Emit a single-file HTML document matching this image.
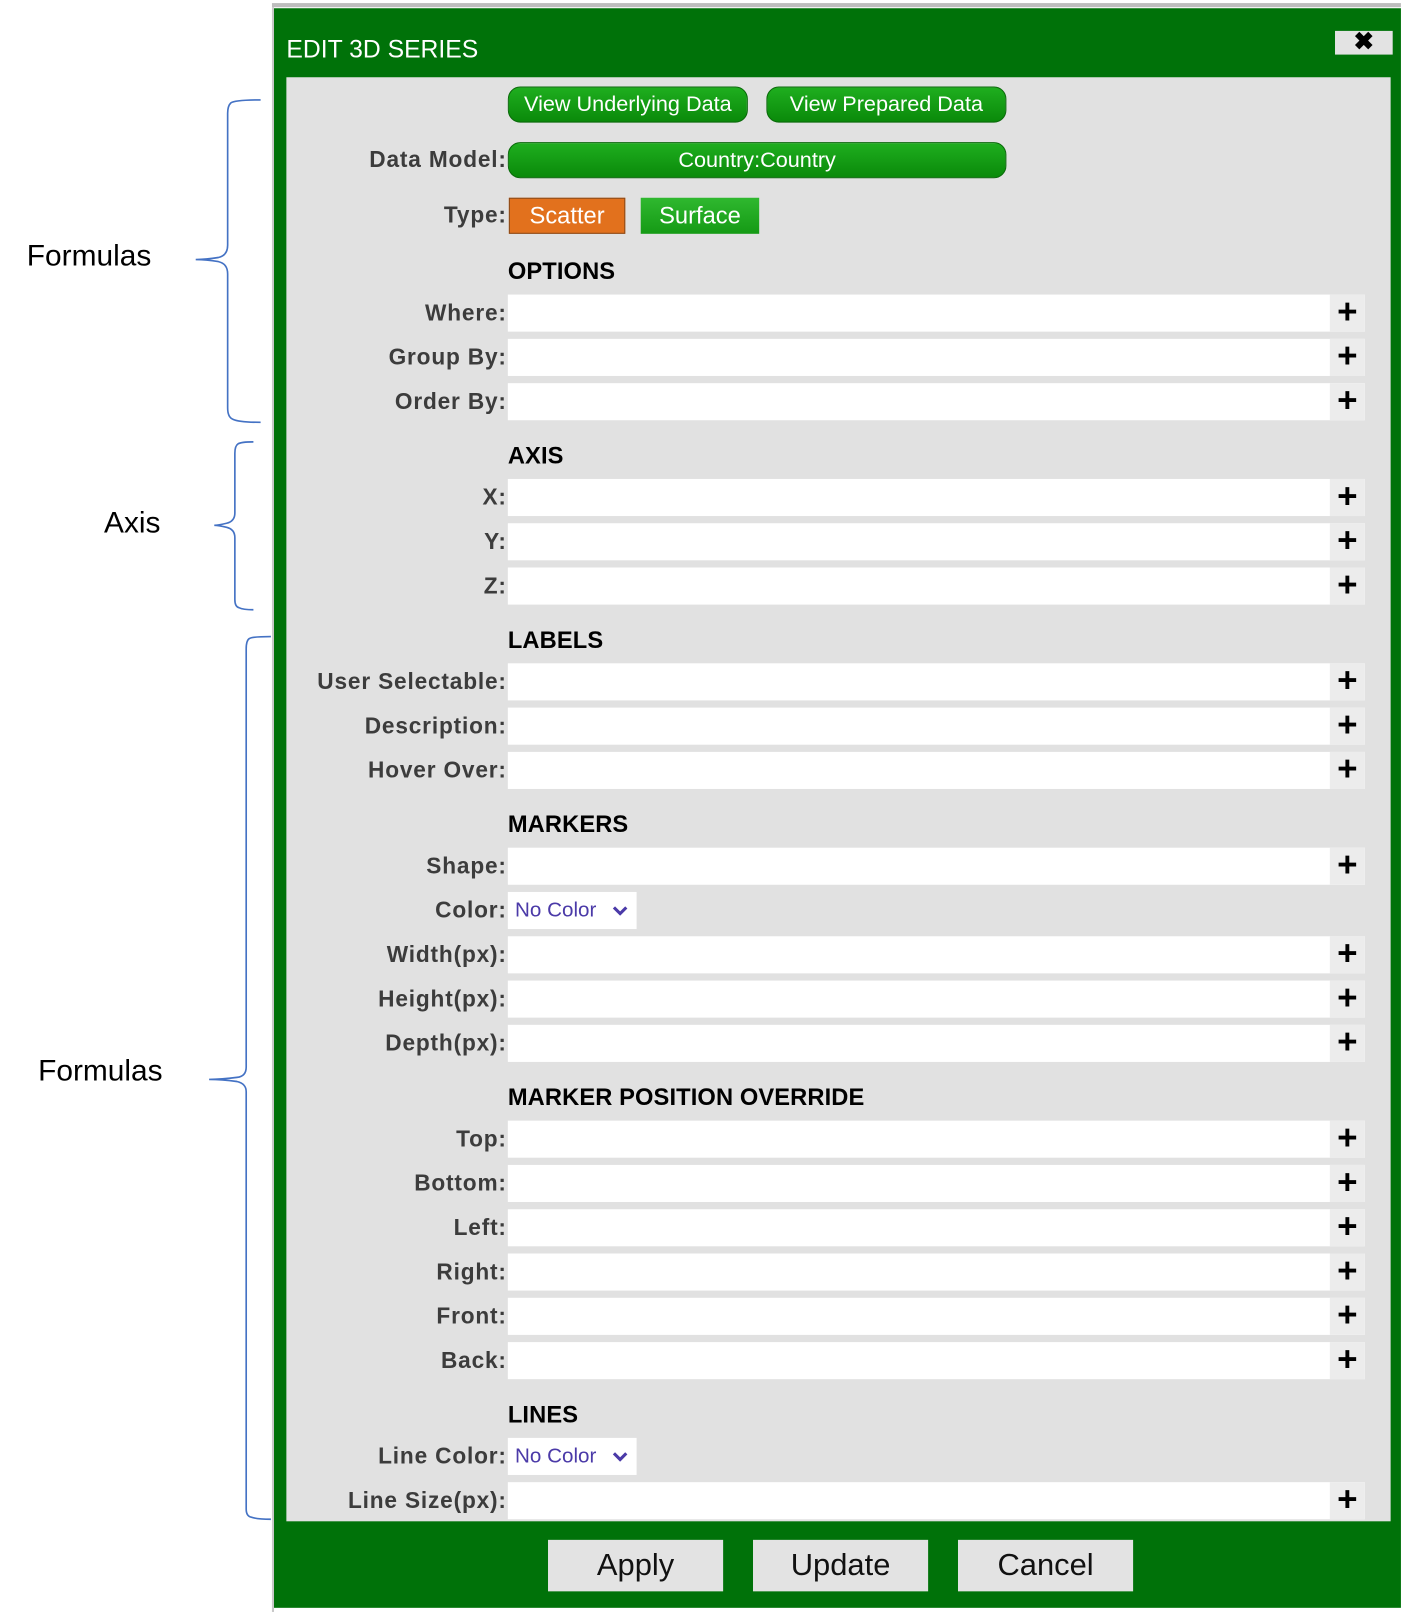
<!DOCTYPE html>
<html><head><meta charset="utf-8"><style>
*{margin:0;padding:0;box-sizing:border-box}
html,body{width:1401px;height:1612px;overflow:hidden;background:#fff}
#s{position:absolute;left:0;top:0;width:1360px;height:1565px;transform:scale(1.0301,1.0300);transform-origin:0 0;font-family:"Liberation Sans Narrow","Liberation Sans",sans-serif}
.a{position:absolute}
.lbl{position:absolute;right:868px;width:300px;text-align:right;font-family:"Liberation Sans",sans-serif;font-weight:bold;font-size:22px;letter-spacing:0.8px;color:#3c3c3c;height:36px;line-height:36px}
.inp{position:absolute;left:493px;width:832px;height:36px;background:#fff}
.inp b{position:absolute;right:0;top:0;width:34px;height:36px;background:#ececec;font-family:"Liberation Sans",sans-serif;font-weight:900;font-size:34px;line-height:34px;text-align:center;color:#000}
.h{position:absolute;left:493px;font-weight:bold;font-size:23px;color:#000;line-height:26px;letter-spacing:.1px}
.gb{position:absolute;background:linear-gradient(#1fae1f,#0a8a0a);color:#fff;border-radius:12px;font-size:21px;text-align:center;line-height:34px;height:35px;border:1px solid #0a6a0a}
.sel{position:absolute;left:493px;width:125px;height:36px;background:#fff;color:#4b3aa8;font-family:"Liberation Sans",sans-serif;font-size:20px;line-height:36px;padding-left:7px}
.sel svg{position:absolute;left:101px;top:13px}
.fb{position:absolute;top:1495px;width:170px;height:50px;background:#e3e3e3;font-family:"Liberation Sans",sans-serif;font-size:30px;line-height:50px;text-align:center;color:#111}
.ann{position:absolute;font-family:"Liberation Sans",sans-serif;font-size:29px;color:#000}
</style></head><body><div id="s">
<div class="a" style="left:264px;top:3px;width:1096px;height:4px;background:#bdbdbd"></div>
<div class="a" style="left:264px;top:7px;width:2px;height:1558px;background:#c8c8c8"></div>
<div class="a" style="left:266px;top:8px;width:1094px;height:1553px;background:#007209"></div>
<div class="a" style="left:278px;top:35px;color:#fff;font-size:24px">EDIT 3D SERIES</div>
<div class="a" style="left:1296px;top:30px;width:56px;height:23px;background:#e3e3e3;text-align:center;font-family:'Liberation Sans',sans-serif;font-weight:900;font-size:24px;line-height:22px">✖</div>
<div class="a" style="left:278px;top:75px;width:1072px;height:1402px;background:#e1e1e1"></div>
<div class="gb" style="left:493px;top:84px;width:233px">View Underlying Data</div>
<div class="gb" style="left:744px;top:84px;width:233px">View Prepared Data</div>
<div class="lbl" style="top:137px">Data Model:</div>
<div class="gb" style="left:493px;top:138px;width:484px">Country:Country</div>
<div class="lbl" style="top:191px">Type:</div>
<div class="a" style="left:494px;top:192px;width:113px;height:35px;background:#e2711d;border:1px solid #8a4a1a;color:#fff;font-size:23px;text-align:center;line-height:33px">Scatter</div>
<div class="a" style="left:622px;top:192px;width:115px;height:35px;background:linear-gradient(#2fb82f,#159a15);color:#fff;font-size:23px;text-align:center;line-height:35px">Surface</div>
<div class="h" style="top:250px">OPTIONS</div>
<div class="lbl" style="top:286px">Where:</div><div class="inp" style="top:286px"><b>+</b></div>
<div class="lbl" style="top:329px">Group By:</div><div class="inp" style="top:329px"><b>+</b></div>
<div class="lbl" style="top:372px">Order By:</div><div class="inp" style="top:372px"><b>+</b></div>
<div class="h" style="top:429px">AXIS</div>
<div class="lbl" style="top:465px">X:</div><div class="inp" style="top:465px"><b>+</b></div>
<div class="lbl" style="top:508px">Y:</div><div class="inp" style="top:508px"><b>+</b></div>
<div class="lbl" style="top:551px">Z:</div><div class="inp" style="top:551px"><b>+</b></div>
<div class="h" style="top:608px">LABELS</div>
<div class="lbl" style="top:644px">User Selectable:</div><div class="inp" style="top:644px"><b>+</b></div>
<div class="lbl" style="top:687px">Description:</div><div class="inp" style="top:687px"><b>+</b></div>
<div class="lbl" style="top:730px">Hover Over:</div><div class="inp" style="top:730px"><b>+</b></div>
<div class="h" style="top:787px">MARKERS</div>
<div class="lbl" style="top:823px">Shape:</div><div class="inp" style="top:823px"><b>+</b></div>
<div class="lbl" style="top:866px">Color:</div><div class="sel" style="top:866px">No Color<svg width="16" height="10"><path d="M2 2 L8 8 L14 2" fill="none" stroke="#4b3aa8" stroke-width="3"/></svg></div>
<div class="lbl" style="top:909px">Width(px):</div><div class="inp" style="top:909px"><b>+</b></div>
<div class="lbl" style="top:952px">Height(px):</div><div class="inp" style="top:952px"><b>+</b></div>
<div class="lbl" style="top:995px">Depth(px):</div><div class="inp" style="top:995px"><b>+</b></div>
<div class="h" style="top:1052px">MARKER POSITION OVERRIDE</div>
<div class="lbl" style="top:1088px">Top:</div><div class="inp" style="top:1088px"><b>+</b></div>
<div class="lbl" style="top:1131px">Bottom:</div><div class="inp" style="top:1131px"><b>+</b></div>
<div class="lbl" style="top:1174px">Left:</div><div class="inp" style="top:1174px"><b>+</b></div>
<div class="lbl" style="top:1217px">Right:</div><div class="inp" style="top:1217px"><b>+</b></div>
<div class="lbl" style="top:1260px">Front:</div><div class="inp" style="top:1260px"><b>+</b></div>
<div class="lbl" style="top:1303px">Back:</div><div class="inp" style="top:1303px"><b>+</b></div>
<div class="h" style="top:1360px">LINES</div>
<div class="lbl" style="top:1396px">Line Color:</div><div class="sel" style="top:1396px">No Color<svg width="16" height="10"><path d="M2 2 L8 8 L14 2" fill="none" stroke="#4b3aa8" stroke-width="3"/></svg></div>
<div class="lbl" style="top:1439px">Line Size(px):</div><div class="inp" style="top:1439px"><b>+</b></div>
<div class="fb" style="left:532px">Apply</div>
<div class="fb" style="left:731px">Update</div>
<div class="fb" style="left:930px">Cancel</div>
<svg class="a" style="left:0;top:0" width="270" height="1565">
<g fill="none" stroke="#4472c4" stroke-width="1.6">
<path d="M253 97 Q228 97 224 100 Q221 103 221 110 L221 238 Q221 248 212 250 Q200 252 190 252 Q200 252 212 254 Q221 256 221 266 L221 396 Q221 405 226 407 Q232 410 253 410"/>
<path d="M246 429 Q234 429 231 431 Q228 433 228 440 L228 498 Q228 506 220 508 Q212 510 208 510 Q212 510 220 512 Q228 514 228 522 L228 582 Q228 589 232 590 Q236 592 246 592"/>
<path d="M263 618 Q245 618 242 620 Q239 622 239 630 L239 1036 Q239 1045 230 1046 Q215 1048 203 1048 Q215 1048 230 1050 Q239 1052 239 1060 L239 1465 Q239 1472 244 1473 Q250 1475 263 1475"/>
</g></svg>
<div class="ann" style="left:26px;top:233px">Formulas</div>
<div class="ann" style="left:101px;top:492px">Axis</div>
<div class="ann" style="left:37px;top:1024px">Formulas</div>
</div></body></html>
